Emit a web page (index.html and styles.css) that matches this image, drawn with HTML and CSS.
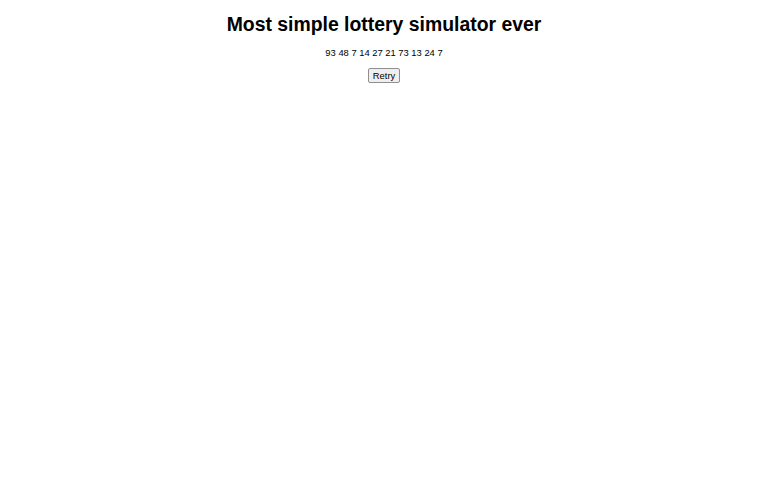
FILE: index.html
```html
<!DOCTYPE html>
<html lang="en">
<head>
    <meta charset="UTF-8">
    <meta name="viewport" content="width=device-width, initial-scale=1.0">
    <title>Lottery Simulator</title>
    <link rel="stylesheet" href="styles.css">
</head>
<body>
    <div class="container">
        <h1>Most simple lottery simulator ever</h1>
        <p id="numbers" class="numbers">93 48 7 14 27 21 73 13 24 7</p>
        <button id="retry" class="retry">Retry</button>
    </div>
</body>
</html>
```

FILE: styles.css
```css
body {
    font-family: "Liberation Sans", Arial, sans-serif;
    margin: 8px;
    text-align: center;
    color: #000;
    background: #fff;
}
.container {
    display: flex;
    flex-direction: column;
    align-items: center;
}
h1 {
    font-size: 19.4px;
    margin: 5px 0 0;
}
.numbers {
    font-size: 9.4px;
    margin: 11px 0 10px;
}
.retry {
    font-family: "Liberation Sans", Arial, sans-serif;
    font-size: 9.4px;
    padding: 1px 4px;
    border: 1px solid #8f8f8f;
    border-radius: 2px;
    background: #efefef;
}
```
